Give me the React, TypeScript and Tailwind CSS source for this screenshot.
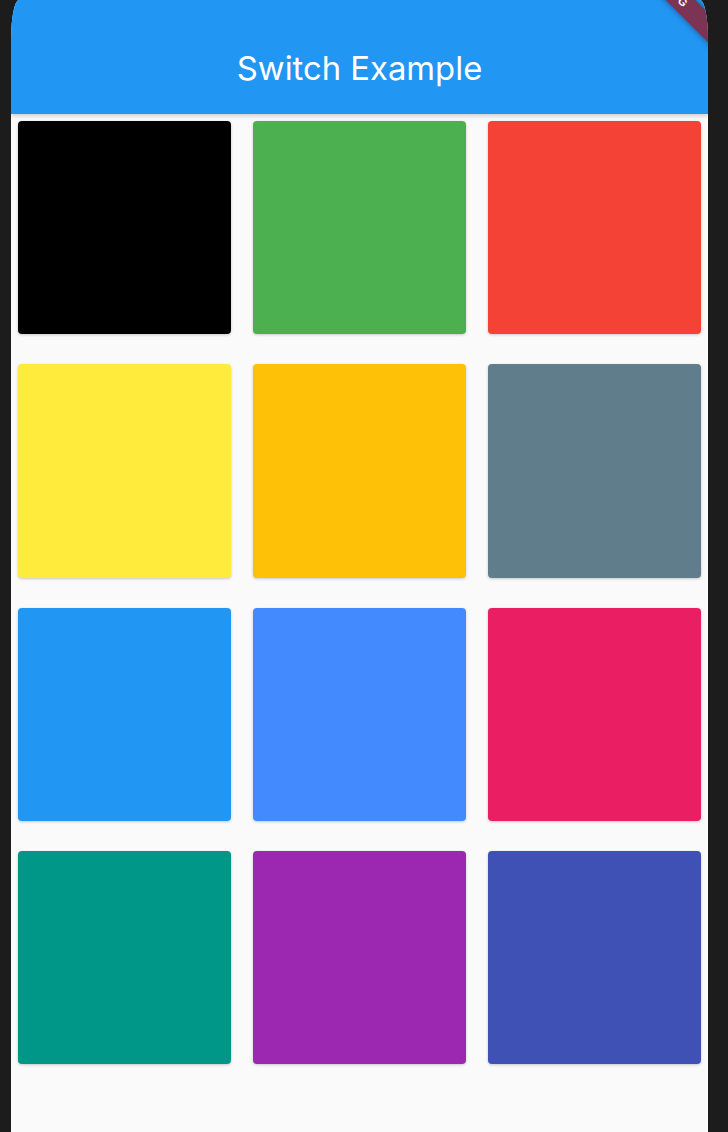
import React from "react";

const colors = [
  "bg-[#000000]",
  "bg-[#4caf50]",
  "bg-[#f44336]",
  "bg-[#ffeb3b]",
  "bg-[#ffc107]",
  "bg-[#607d8b]",
  "bg-[#2196f3]",
  "bg-[#448aff]",
  "bg-[#e91e63]",
  "bg-[#009688]",
  "bg-[#9c27b0]",
  "bg-[#3f51b5]",
];

export default function App() {
  return (
    <div className="w-[728px] h-[1132px] bg-[#1c1c1c] flex overflow-hidden">
      <div className="relative ml-[11px] w-[697px] h-[1132px] bg-[#fafafa] overflow-hidden rounded-tl-[8px_40px] rounded-tr-[8px_40px] flex flex-col">
        <header className="relative z-10 h-[114px] bg-[#2196f3] flex items-end justify-center pb-[29px] shadow-[0_2px_4px_rgba(0,0,0,0.18)]">
          <h1
            className="text-white text-[32.8px] leading-none font-normal"
            style={{ fontFamily: "Inter, Roboto, 'Noto Sans', sans-serif" }}
          >
            Switch Example
          </h1>
        </header>
        <div className="grid grid-cols-[213px_213px_213px] gap-x-[22px] gap-y-[30px] px-[7px] pt-[7px]">
          {colors.map((c, i) => (
            <div
              key={i}
              className={`${c} h-[213.3px] rounded-[4px] shadow-[0_1px_3px_rgba(0,0,0,0.2)]`}
            />
          ))}
        </div>
        <div className="absolute z-20 left-[580px] top-[-20px] w-[160px] h-[21px] rotate-45 bg-[#7b3453] flex items-center justify-center shadow-[0_0_6px_rgba(0,0,0,0.4)]">
          <span
            className="text-white text-[11px] font-bold leading-none tracking-[0.5px]"
            style={{ fontFamily: "'Liberation Sans', Arial, sans-serif" }}
          >
            DEBUG
          </span>
        </div>
      </div>
    </div>
  );
}
